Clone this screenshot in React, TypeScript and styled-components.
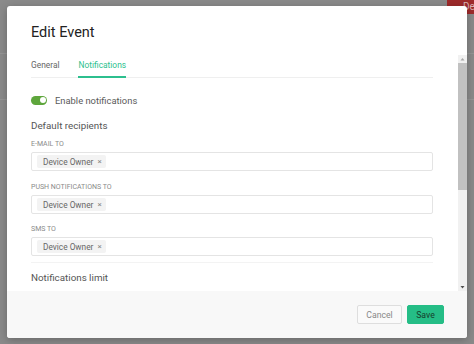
import React from 'react';
import styled, { createGlobalStyle } from 'styled-components';

const GlobalStyle = createGlobalStyle`
  html, body {
    margin: 0;
    padding: 0;
    background: #8a8a8a;
    font-family: Roboto, "Liberation Sans", Arial, sans-serif;
  }
  * {
    box-sizing: border-box;
  }
`;

const Page = styled.div`
  position: relative;
  width: 474px;
  height: 344px;
  overflow: hidden;
  background: #8a8a8a;
`;

const BehindBar = styled.div`
  display: flex;
  justify-content: flex-end;
  height: 54px;
  border-bottom: 1px solid #959595;
`;

const BehindButton = styled.div`
  width: 27px;
  height: 14px;
  background: #9e2a2b;
  color: #d9b4b4;
  font-size: 10px;
  line-height: 14px;
  padding-left: 16px;
  overflow: hidden;
`;

const BehindRow = styled.div`
  height: 46px;
  border-bottom: 1px solid #959595;
`;

const Modal = styled.div`
  position: absolute;
  left: 7px;
  top: 6px;
  width: 460px;
  height: 332px;
  background: #fff;
  border-radius: 3px;
  box-shadow: 0 2px 8px rgba(0, 0, 0, 0.25);
  display: flex;
  flex-direction: column;
  overflow: hidden;
`;

const Header = styled.div`
  height: 49px;
  padding: 18px 24px 0;
  flex-shrink: 0;
`;

const Title = styled.h2`
  margin: 0;
  font-size: 14.5px;
  line-height: 18px;
  font-weight: 400;
  color: #222;
`;

const Body = styled.div`
  flex: 1;
  min-height: 0;
  display: flex;
`;

const Content = styled.div`
  flex: 1;
  overflow: hidden;
  padding: 0 25px 24px 24px;
`;

const ScrollTrack = styled.div`
  width: 9px;
  flex-shrink: 0;
  background: #f1f1f1;
  display: flex;
  flex-direction: column;
`;

const ScrollArrow = styled.svg`
  display: block;
  width: 9px;
  height: 8px;
  flex-shrink: 0;
`;

const ThumbArea = styled.div`
  flex: 1;
`;

const Thumb = styled.div`
  width: 9px;
  background: #c1c1c1;
`;

const Tabs = styled.div`
  display: flex;
  gap: 19px;
  border-bottom: 1px solid #efefef;
  padding-top: 3px;
`;

const Tab = styled.div<{ $active?: boolean }>`
  font-size: 8.4px;
  line-height: 14px;
  padding-bottom: 4px;
  margin-bottom: -1px;
  color: ${(p) => (p.$active ? '#2cbf8e' : '#666')};
  border-bottom: 2px solid ${(p) => (p.$active ? '#2cbf8e' : 'transparent')};
`;

const ToggleRow = styled.label`
  display: flex;
  align-items: center;
  gap: 8px;
  margin-top: 15px;
  height: 14px;
  font-size: 9.4px;
  color: #5a5a5a;
`;

const Switch = styled.span<{ $on?: boolean }>`
  position: relative;
  display: inline-block;
  width: 16px;
  height: 9px;
  border-radius: 5px;
  background: ${(p) => (p.$on ? '#5ea63c' : '#ccc')};

  &::after {
    content: '';
    position: absolute;
    top: 1.5px;
    left: ${(p) => (p.$on ? '8.5px' : '1.5px')};
    width: 6px;
    height: 6px;
    border-radius: 50%;
    background: #fff;
  }
`;

const SectionTitle = styled.div<{ $top: number }>`
  margin-top: ${(p) => p.$top}px;
  font-size: 9.8px;
  line-height: 14px;
  color: #555;
`;

const FieldLabel = styled.div<{ $top: number }>`
  margin-top: ${(p) => p.$top}px;
  font-size: 7px;
  line-height: 10px;
  color: #8a8a8a;
  text-transform: uppercase;
`;

const TagInput = styled.div`
  margin-top: 3px;
  height: 19px;
  border: 1px solid #e4e4e4;
  border-radius: 2px;
  display: flex;
  align-items: center;
  padding: 0 5px;
  background: #fff;
`;

const Chip = styled.span`
  display: inline-flex;
  align-items: center;
  gap: 4px;
  white-space: nowrap;
  height: 13px;
  padding: 0 4px 0 6px;
  background: #f3f3f3;
  border-radius: 2px;
  font-size: 8.3px;
  color: #666;
`;

const ChipClose = styled.span`
  font-size: 8px;
  color: #888;
`;

const Divider = styled.div`
  margin-top: 6px;
  border-top: 1px solid #f3f3f3;
`;

const Footer = styled.div`
  height: 47px;
  flex-shrink: 0;
  background: #f8f8f8;
  display: flex;
  align-items: center;
  justify-content: flex-end;
  gap: 5px;
  padding-right: 23px;
`;

const Button = styled.button<{ $primary?: boolean }>`
  height: 19px;
  width: ${(p) => (p.$primary ? '37px' : '45px')};
  padding: 0;
  font-family: inherit;
  font-size: 8.7px;
  border-radius: 2px;
  cursor: pointer;
  border: 1px solid ${(p) => (p.$primary ? '#25bd86' : '#dedede')};
  background: ${(p) => (p.$primary ? '#25bd86' : '#fafafa')};
  color: ${(p) => (p.$primary ? '#163d2c' : '#888')};
`;

const recipients = [
  { label: 'E-mail to', top: 6 },
  { label: 'Push notifications to', top: 11 },
  { label: 'SMS to', top: 10 },
];

export default function App() {
  return (
    <>
      <GlobalStyle />
      <Page>
        <BehindBar>
          <BehindButton>De</BehindButton>
        </BehindBar>
        <BehindRow />
        <Modal>
          <Header>
            <Title>Edit Event</Title>
          </Header>
          <Body>
            <Content>
              <Tabs>
                <Tab>General</Tab>
                <Tab $active>Notifications</Tab>
              </Tabs>
              <ToggleRow>
                <Switch $on />
                Enable notifications
              </ToggleRow>
              <SectionTitle $top={12}>Default recipients</SectionTitle>
              {recipients.map((r) => (
                <React.Fragment key={r.label}>
                  <FieldLabel $top={r.top}>{r.label}</FieldLabel>
                  <TagInput>
                    <Chip>
                      Device Owner <ChipClose>×</ChipClose>
                    </Chip>
                  </TagInput>
                </React.Fragment>
              ))}
              <Divider />
              <SectionTitle $top={8}>Notifications limit</SectionTitle>
            </Content>
            <ScrollTrack>
              <ScrollArrow viewBox="0 0 9 8">
                <path d="M2.5 5.5h4L4.5 3z" fill="#a8a8a8" />
              </ScrollArrow>
              <ThumbArea>
                <Thumb style={{ height: 127 }} />
              </ThumbArea>
              <ScrollArrow viewBox="0 0 9 8">
                <path d="M2.5 3h4L4.5 5.5z" fill="#505050" />
              </ScrollArrow>
            </ScrollTrack>
          </Body>
          <Footer>
            <Button>Cancel</Button>
            <Button $primary>Save</Button>
          </Footer>
        </Modal>
      </Page>
    </>
  );
}
